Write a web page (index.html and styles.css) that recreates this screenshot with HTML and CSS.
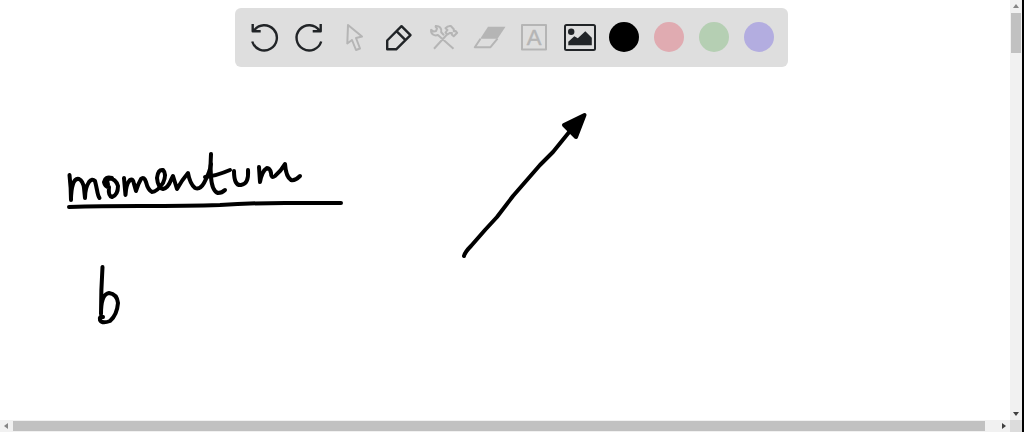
FILE: index.html
```html
<!DOCTYPE html>
<html lang="en">
<head>
<meta charset="utf-8">
<meta name="viewport" content="width=device-width, initial-scale=1">
<title>Whiteboard</title>
<link rel="stylesheet" href="styles.css">
</head>
<body class="app">
<main class="board">
  <svg class="ink" role="img" aria-label="Handwritten notes: momentum, b, and an arrow pointing up and right">
    <!-- heading -->
    <path d="M69.500 175 Q71 188 71 200 Q71 190 73 184 Q75 178 79 179 Q83 181 84 188 L85 198 Q85 188 89 182 Q92 178 95 181 Q96 185 97 190 Q98 196 99.500 198"/>
    <path d="M112 178 Q105 176 104 182 Q105 187 109 187 Q108 196 112 197 Q118 195 118 186 Q116 179 109 178 Q106 181 108 184"/>
    <path d="M124 178 L125.500 195 Q126 184 130 180 Q133 178 134 184 L136 191 Q138 184 141 179 Q144 176 146 182 Q148 190 152 192 Q157 192 163 183 Q167 174 163 170 Q158 169 157 178 Q158 188 163 189 Q168 188 171 180 L173 176 L177 189 Q182 180 188 173 Q190 184 195 188 Q200 190 204 183 Q210 172 211 164"/>
    <path d="M211 154 Q210 166 211 177 Q212 191 218 193 Q222 193 225 190"/>
    <path d="M205 177 Q216 176 230 170"/>
    <path d="M234 171 Q234 186 241 185 Q249 184 248 170"/>
    <path d="M259 167 L260 182 Q262 171 267 168 Q270 168 271 173 Q271 179 275 176 Q281 171 285 164 Q286 177 291 180 Q295 181 300 176"/>
    <path d="M69 207 Q100 206 140 206 Q190 206 220 205 Q250 203 285 203 L341 203"/>
    <!-- symbol -->
    <path d="M102.500 267 Q101 290 101 314 Q101 294 109 293 Q117 294 118 303 Q117 315 110 321 Q102 324 100 320 Q99 316 103 317"/>
    <!-- vector -->
    <path d="M464 256 Q465 252 471 246 L485 230 L497 217 L513 196 L540 165 L553 152 L570 131"/>
    <path class="ink-head" d="M564 125 L584.500 115 L576 137 Z"/>
  </svg>
</main>

<div class="toolbar" role="toolbar" aria-label="Drawing tools">
  <button class="tool" type="button" aria-label="Undo">
    <svg class="icon" viewBox="0 0 30 30"><path class="heavy" d="M3.200 19.500A12.600 12.600 0 1 0 5 8.500M3.700 2v7.300h8"/></svg>
  </button>
  <button class="tool" type="button" aria-label="Redo">
    <svg class="icon" viewBox="0 0 30 30"><path class="heavy" d="M27.200 19.500A12.600 12.600 0 1 1 25.400 8.500M26.700 2v7.300h-8"/></svg>
  </button>
  <button class="tool tool-off" type="button" aria-label="Select">
    <svg class="icon" viewBox="0 0 30 30"><path d="M9 3l14 11.500-6 1.500 4 10.500-4 1.500-4-10-4.700 3.500z"/></svg>
  </button>
  <button class="tool" type="button" aria-label="Pen">
    <svg class="icon" viewBox="0 0 30 30"><path class="heavy" d="M3.200 27.300V18.500L17.500 4.200l9 9-14.300 14.100zM12.500 9.200l9 9"/></svg>
  </button>
  <button class="tool tool-off" type="button" aria-label="Tools">
    <svg class="icon" viewBox="0 0 30 30"><path d="M6 4l2 2.700-1 2.300-2.300.6-2.600-1.800c-.5 4.200 3.200 6.500 6.800 5.200L24.500 26.700M6 4c4.500-.7 7.200 2.500 6.200 6.200l2.800 3M5 26.700L18 12.500M16.500 6.200c1.500-1.800 3.200-2.500 5.300-2.200l3 3.200v2l1.800-.2 1.600 1.800-3.500 3.500-2-1.800.2-1.600h-2l-2.400 1.600-2-2 2-2.600z"/></svg>
  </button>
  <button class="tool tool-off" type="button" aria-label="Eraser">
    <svg class="icon" viewBox="0 0 30 30"><path class="solid" d="M14 4.700h17.500L23.500 16.700H6.200z"/><path d="M6.500 16.700L.8 25.200h15.700l7-8.500"/></svg>
  </button>
  <button class="tool tool-off" type="button" aria-label="Text">
    <svg class="icon" viewBox="0 0 30 30"><rect x="3" y="3" width="24" height="24.500"/><text class="letter" x="15" y="23">A</text></svg>
  </button>
  <button class="tool" type="button" aria-label="Image">
    <svg class="icon" viewBox="0 0 30 30"><rect x="1" y="3" width="30" height="25" rx="1.500"/><circle class="solid" cx="7.200" cy="9.700" r="3.200"/><path class="solid" d="M4.300 23.300v-3.500l6-5.500 3.500 2 7.500-7 6.500 6.500v7.500z"/></svg>
  </button>
  <button class="swatch swatch-black" type="button" aria-label="Black"></button>
  <button class="swatch swatch-red" type="button" aria-label="Red"></button>
  <button class="swatch swatch-green" type="button" aria-label="Green"></button>
  <button class="swatch swatch-purple" type="button" aria-label="Purple"></button>
</div>

<div class="scroll scroll-y">
  <button class="step" type="button" aria-label="Scroll up"><svg class="caret caret-soft" viewBox="0 0 6 6"><path d="M0 5l3-4 3 4z"/></svg></button>
  <div class="track"><div class="thumb"></div></div>
  <button class="step" type="button" aria-label="Scroll down"><svg class="caret" viewBox="0 0 6 6"><path d="M0 1l3 4 3-4z"/></svg></button>
</div>
<div class="scroll scroll-x">
  <button class="step" type="button" aria-label="Scroll left"><svg class="caret caret-soft" viewBox="0 0 6 6"><path d="M5 0L1 3l4 3z"/></svg></button>
  <div class="track"><div class="thumb"></div></div>
  <button class="step" type="button" aria-label="Scroll right"><svg class="caret" viewBox="0 0 6 6"><path d="M1 0l4 3-4 3z"/></svg></button>
</div>
<div class="corner"></div>
</body>
</html>
```

FILE: styles.css
```css
* { box-sizing: border-box; }

.app {
  position: relative;
  display: grid;
  grid-template-columns: 1fr 12px;
  grid-template-rows: 1fr 12px;
  height: 100vh;
  margin: 0;
  border-right: 2px solid #000;
  background: #fff;
  font-family: "Liberation Sans", Arial, sans-serif;
  overflow: hidden;
}

button {
  margin: 0;
  padding: 0;
  border: 0;
  background: none;
  cursor: pointer;
}

.board { min-width: 0; min-height: 0; }

.ink {
  display: block;
  width: 100%;
  height: 100%;
  fill: none;
  stroke: #000;
  stroke-width: 4px;
  stroke-linecap: round;
  stroke-linejoin: round;
}
.ink-head { fill: #000; }

/* Floats over the board, centred in the window */
.toolbar {
  position: absolute;
  top: 8px;
  left: 0;
  right: 0;
  display: flex;
  gap: 15px;
  width: max-content;
  margin: 0 auto;
  padding: 14px 14px 15px;
  border-radius: 6px;
  background: #dedede;
}

.tool, .swatch { width: 30px; height: 30px; }
.tool { color: #212427; }
.tool-off { color: #b5b5b5; }

.icon {
  display: block;
  width: 30px;
  height: 30px;
  overflow: visible;
  fill: none;
  stroke: currentColor;
  stroke-width: 2px;
  stroke-linejoin: round;
}
.heavy { stroke-width: 2.4; }
.solid { fill: currentColor; stroke: none; }
.letter {
  fill: currentColor;
  stroke: currentColor;
  stroke-width: 0.5;
  font-size: 22px;
  text-anchor: middle;
}

.swatch { border-radius: 50%; }
.swatch-black { background: #000; }
.swatch-red { background: #e0abb1; }
.swatch-green { background: #b5cfb3; }
.swatch-purple { background: #b3ade0; }

.scroll { display: flex; background: #f1f1f1; }
.scroll-y { flex-direction: column; }
.track { flex: 1; display: flex; padding: 1px; }
.scroll-y .track { flex-direction: column; }
.scroll-x .track { padding: 1px 0; }
.thumb { background: #c1c1c1; }
.scroll-y .thumb { height: 40px; }
.scroll-x .thumb { width: 98.600%; margin-left: 1px; }
.step {
  display: grid;
  place-items: center;
  width: 12px;
  height: 12px;
}
.caret { width: 6px; height: 6px; fill: #404040; }
.caret-soft { fill: #858585; }
.corner { background: #dcdcdc; }
```
